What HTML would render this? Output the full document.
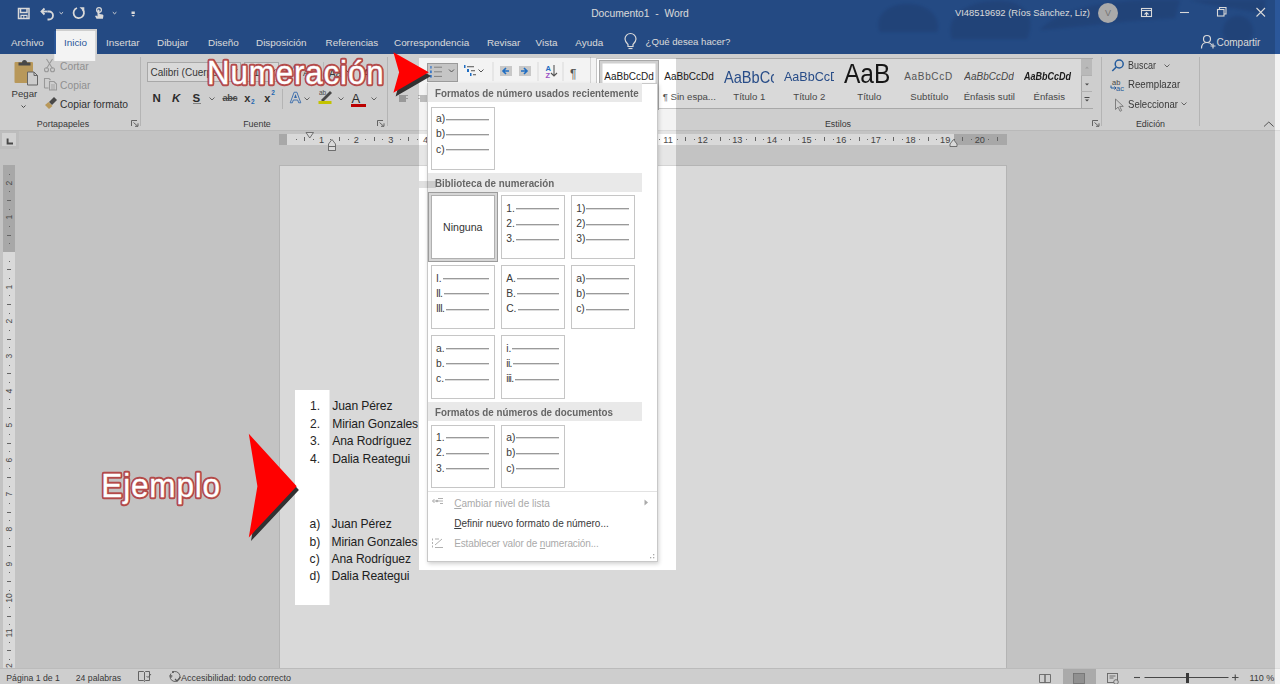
<!DOCTYPE html><html><head><meta charset="utf-8"><title>Documento1 - Word</title><style>
*{box-sizing:border-box}
html,body{margin:0;padding:0}
body{width:1280px;height:684px;overflow:hidden;position:relative;background:#e6e6e6;font-family:"Liberation Sans",sans-serif;color:#444}
.a{position:absolute}
.t{position:absolute;white-space:nowrap;line-height:1}
svg{position:absolute;overflow:visible}
</style></head><body>
<div class="a" style="left:0px;top:0px;width:1280px;height:54px;background:#2b579a"></div>
<svg style="left:0;top:0" width="1280" height="54"><defs><filter id="cb"><feGaussianBlur stdDeviation="1.5"/></filter></defs><g fill="#1d3b6e" opacity="0.26" filter="url(#cb)"><path d="M880 32C874 18 886 4 906 4C926 3 942 16 937 32Z"/><path d="M952 39C944 16 968 0 1000 1C1032 2 1034 24 1027 39Z"/><path d="M1040 30C1060 8 1110 -2 1180 0L1175 18C1130 20 1090 26 1040 30Z"/><circle cx="1238" cy="31" r="15"/><path d="M1190 0H1265V14C1240 8 1210 6 1190 0Z"/></g></svg>
<svg style="left:0;top:0" width="140" height="28" fill="none" stroke="#fff" stroke-width="1.5">
<path d="M18.5 8.5h10.5v10h-10.5z"/><path d="M20.5 8.5v4h6.5v-4" /><path d="M21 18.5v-3.2h6v3.2" stroke-width="1.2"/><rect x="23.3" y="16" width="1" height="2" fill="#fff" stroke="none"/>
<path d="M47.5 11.5h1.5a4 4 0 0 1 0 8h-1.5" stroke-width="1.8"/><path d="M44.5 8.5l-3 3 3 3" stroke-width="1.8"/><path d="M42 11.5h5.5" stroke-width="1.8"/>
<path d="M59.5 12.2l1.8 1.6 1.8-1.6" stroke-width="1"/>
<path d="M82.5 9.3a5.2 5.2 0 1 1 -5.5 -1.3" stroke-width="1.8"/><path d="M79.5 7.2h4.8v4.8z" fill="#fff" stroke="none"/>
<circle cx="99" cy="10" r="2.4" stroke-width="1.2"/><path d="M96.5 18.8l-1.5-2.8 1.3-.6 1.2 1.2V10.5a1 1 0 0 1 2 0v3.5l3 .6c.7.2 1 .8.9 1.5l-.5 2.7z" fill="#fff" stroke="none"/>
<path d="M112.8 12.2l1.8 1.6 1.8-1.6" stroke-width="1"/>
<rect x="131.5" y="11.5" width="3.3" height="2.5" fill="#fff" stroke="none"/><path d="M131.3 15h3.7l-1.85 1.8z" fill="#fff" stroke="none"/>
</svg>
<div class="t" style="left:440px;width:400px;text-align:center;top:8.78px;font-size:10.3px;color:#fff;font-weight:400;">Documento1&nbsp; - &nbsp;Word</div>
<div class="t" style="left:955px;top:8.04px;font-size:9.4px;color:#fff;font-weight:400;">VI48519692 (Ríos Sánchez, Liz)</div>
<div class="a" style="left:1098px;top:3px;width:20px;height:20px;border-radius:50%;background:#c8c8c8"></div>
<div class="t" style="left:908px;width:400px;text-align:center;top:9.38px;font-size:9px;color:#888;font-weight:400;">V</div>
<svg style="left:0;top:0" width="1280" height="28" fill="none" stroke="#fff" stroke-width="1.1">
<rect x="1141.5" y="8.5" width="10" height="8"/><path d="M1141.5 10.5h10"/><path d="M1144.5 14.5l2-2 2 2M1146.5 12.5v4"/>
<path d="M1180 12.5h9"/>
<rect x="1217.5" y="9.5" width="6.5" height="6.5"/><path d="M1219.5 9.5v-2h6.5v6.5h-2"/>
<path d="M1256.5 8l8.5 8.5M1265 8l-8.5 8.5"/>
</svg>
<div class="a" style="left:56px;top:29px;width:41px;height:25px;background:#f3f3f3"></div>
<div class="t" style="left:10.9px;top:37.72px;font-size:9.9px;color:#fff;font-weight:400;">Archivo</div>
<div class="t" style="left:64px;top:37.72px;font-size:9.9px;color:#2b579a;font-weight:400;">Inicio</div>
<div class="t" style="left:106px;top:37.72px;font-size:9.9px;color:#fff;font-weight:400;">Insertar</div>
<div class="t" style="left:157px;top:37.72px;font-size:9.9px;color:#fff;font-weight:400;">Dibujar</div>
<div class="t" style="left:208px;top:37.72px;font-size:9.9px;color:#fff;font-weight:400;">Diseño</div>
<div class="t" style="left:256px;top:37.72px;font-size:9.9px;color:#fff;font-weight:400;">Disposición</div>
<div class="t" style="left:325.6px;top:37.72px;font-size:9.9px;color:#fff;font-weight:400;">Referencias</div>
<div class="t" style="left:394px;top:37.72px;font-size:9.9px;color:#fff;font-weight:400;">Correspondencia</div>
<div class="t" style="left:486.9px;top:37.72px;font-size:9.9px;color:#fff;font-weight:400;">Revisar</div>
<div class="t" style="left:535.6px;top:37.72px;font-size:9.9px;color:#fff;font-weight:400;">Vista</div>
<div class="t" style="left:575.3px;top:37.72px;font-size:9.9px;color:#fff;font-weight:400;">Ayuda</div>
<svg style="left:0;top:0" width="1280" height="54" fill="none" stroke="#fff" stroke-width="1.2">
<path d="M628 44.5c-1.5-1.5-3-3-3-5.5a5.5 5.5 0 0 1 11 0c0 2.5-1.5 4-3 5.5v2h-5z"/><path d="M628.5 48.5h4"/>
</svg>
<div class="t" style="left:645.6px;top:37.37px;font-size:9.6px;color:#fff;font-weight:400;">¿Qué desea hacer?</div>
<svg style="left:0;top:0" width="1280" height="54" fill="none" stroke="#fff" stroke-width="1.2">
<circle cx="1207" cy="39" r="3.5"/><path d="M1201.5 48.5c0-4 2.5-6 5.5-6s4 1 5 2.5"/><path d="M1210.5 46h5M1213 43.5v5"/>
</svg>
<div class="t" style="left:1216.5px;top:37.83px;font-size:10px;color:#fff;font-weight:400;">Compartir</div>
<div class="a" style="left:0px;top:54px;width:1280px;height:76px;background:#f3f3f3"></div>
<div class="a" style="left:0px;top:130px;width:1280px;height:1px;background:#dadada"></div>
<div class="a" style="left:140px;top:57px;width:1px;height:69px;background:#d4d4d4"></div>
<div class="a" style="left:386.5px;top:57px;width:1px;height:69px;background:#d4d4d4"></div>
<div class="a" style="left:590px;top:57px;width:1px;height:69px;background:#d4d4d4"></div>
<div class="a" style="left:1100.5px;top:57px;width:1px;height:69px;background:#d4d4d4"></div>
<div class="a" style="left:1198.5px;top:57px;width:1px;height:69px;background:#d4d4d4"></div>
<div class="t" style="left:-137px;width:400px;text-align:center;top:119.67px;font-size:8.9px;color:#444;font-weight:400;">Portapapeles</div>
<div class="t" style="left:57px;width:400px;text-align:center;top:119.67px;font-size:8.9px;color:#444;font-weight:400;">Fuente</div>
<div class="t" style="left:638px;width:400px;text-align:center;top:119.67px;font-size:8.9px;color:#444;font-weight:400;">Estilos</div>
<div class="t" style="left:950.5px;width:400px;text-align:center;top:119.67px;font-size:8.9px;color:#444;font-weight:400;">Edición</div>
<svg style="left:130.5px;top:120px" width="8" height="7" fill="none" stroke="#666" stroke-width="0.9"><path d="M0.5 6V0.5H6"/><path d="M2.5 2.5l4 3.5M4 6.3h3V3.3"/></svg>
<svg style="left:377.3px;top:120px" width="8" height="7" fill="none" stroke="#666" stroke-width="0.9"><path d="M0.5 6V0.5H6"/><path d="M2.5 2.5l4 3.5M4 6.3h3V3.3"/></svg>
<svg style="left:1092px;top:120px" width="8" height="7" fill="none" stroke="#666" stroke-width="0.9"><path d="M0.5 6V0.5H6"/><path d="M2.5 2.5l4 3.5M4 6.3h3V3.3"/></svg>
<svg style="left:1262.5px;top:121px" width="12" height="8" fill="none" stroke="#555" stroke-width="0.9"><path d="M1 5.5l4.8-4.5 4.8 4.5"/></svg>
<svg style="left:0;top:54px" width="140" height="76">
<rect x="14.5" y="8" width="18.5" height="21" rx="1" fill="#d9b36a"/>
<path d="M18.5 11.5v-3h3.5a2.5 2.5 0 0 1 5 0h3.5v3z" fill="#555"/>
<path d="M27.5 18h6.5l3.5 3.5v9.5h-10z" fill="#f0f0f0" stroke="#777" stroke-width="1"/>
<path d="M34 18v3.5h3.5" fill="none" stroke="#777" stroke-width="1"/>
<path d="M21.5 51.5l2 2 2-2" fill="none" stroke="#555" stroke-width="1"/>
<g fill="none" stroke="#b4b4b4" stroke-width="1.1"><path d="M46.5 5l6 9.5M52.5 5l-6 9.5"/><circle cx="46.5" cy="15.8" r="2"/><circle cx="52.5" cy="15.8" r="2"/>
<path d="M44.5 34V24.5h4.5l1.5 1.5"/><path d="M44.5 34h4"/><path d="M49.5 27.5h4.5l2.5 2.5v6h-7z"/><path d="M51 31h4M51 33h4M51 35h4" stroke-width="0.8"/></g>
<path d="M45 51l4 4 3.5-3-4-4z" fill="#d9b36a"/><path d="M49 48l5-5 3 3-5 5z" fill="#555"/>
</svg>
<div class="t" style="left:11.6px;top:89.07px;font-size:9.6px;color:#444;font-weight:400;">Pegar</div>
<div class="t" style="left:60px;top:61.58px;font-size:10.3px;color:#aaa;font-weight:400;">Cortar</div>
<div class="t" style="left:60px;top:80.58px;font-size:10.3px;color:#aaa;font-weight:400;">Copiar</div>
<div class="t" style="left:60px;top:99.58px;font-size:10.3px;color:#3a3a3a;font-weight:400;">Copiar formato</div>
<div class="a" style="left:147px;top:62px;width:94px;height:19.5px;background:#fff;border:1px solid #c6c6c6"></div>
<div class="t" style="left:150.5px;top:68.03px;font-size:10px;color:#444;font-weight:400;">Calibri (Cuerpo)</div>
<svg style="left:231px;top:69px" width="8" height="5" fill="none" stroke="#555" stroke-width="1"><path d="M0.5 0.5l3 3 3-3"/></svg>
<div class="a" style="left:243.5px;top:62px;width:35.5px;height:19.5px;background:#fff;border:1px solid #c6c6c6"></div>
<div class="t" style="left:249px;top:68.03px;font-size:10px;color:#444;font-weight:400;">11</div>
<svg style="left:269px;top:69px" width="8" height="5" fill="none" stroke="#555" stroke-width="1"><path d="M0.5 0.5l3 3 3-3"/></svg>
<div class="t" style="left:284px;top:67.69px;font-size:11px;color:#444;font-weight:400;">A</div>
<div class="t" style="left:292px;top:64.07px;font-size:7px;color:#2b579a;font-weight:400;">˄</div>
<div class="t" style="left:303px;top:69.38px;font-size:9px;color:#444;font-weight:400;">A</div>
<div class="t" style="left:310px;top:64.07px;font-size:7px;color:#2b579a;font-weight:400;">˅</div>
<div class="a" style="left:322.5px;top:62px;width:1px;height:19px;background:#dadada"></div>
<div class="t" style="left:329px;top:68.53px;font-size:10px;color:#444;font-weight:400;">Aa</div>
<svg style="left:345px;top:69px" width="8" height="5" fill="none" stroke="#555" stroke-width="1"><path d="M0.5 0.5l3 3 3-3"/></svg>
<div class="t" style="left:362px;top:67.69px;font-size:11px;color:#444;font-weight:400;font-style:italic">A</div>
<div class="t" style="left:152.5px;top:92.87px;font-size:11.5px;color:#333;font-weight:700;">N</div>
<div class="t" style="left:172px;top:92.87px;font-size:11.5px;color:#333;font-weight:700;font-style:italic">K</div>
<div class="t" style="left:192.5px;top:92.87px;font-size:11.5px;color:#333;font-weight:700;">S</div>
<div class="a" style="left:193px;top:103.3px;width:8px;height:1px;background:#999"></div>
<svg style="left:208.5px;top:96.5px" width="7" height="5" fill="none" stroke="#666" stroke-width="0.9"><path d="M0.5 0.5l2.5 2.5 2.5-2.5"/></svg>
<svg style="left:304px;top:96.5px" width="7" height="5" fill="none" stroke="#666" stroke-width="0.9"><path d="M0.5 0.5l2.5 2.5 2.5-2.5"/></svg>
<svg style="left:338px;top:96.5px" width="7" height="5" fill="none" stroke="#666" stroke-width="0.9"><path d="M0.5 0.5l2.5 2.5 2.5-2.5"/></svg>
<svg style="left:371px;top:96.5px" width="7" height="5" fill="none" stroke="#666" stroke-width="0.9"><path d="M0.5 0.5l2.5 2.5 2.5-2.5"/></svg>
<div class="t" style="left:222.5px;top:94.41px;font-size:9.2px;color:#555;font-weight:700;text-decoration:line-through;letter-spacing:-0.3px">abc</div>
<div class="t" style="left:244.2px;top:93.09px;font-size:11px;color:#3a3a3a;font-weight:700;">x</div>
<div class="t" style="left:251px;top:99.30px;font-size:6.5px;color:#2b79d0;font-weight:700;">2</div>
<div class="t" style="left:264.2px;top:93.09px;font-size:11px;color:#3a3a3a;font-weight:700;">x</div>
<div class="t" style="left:271.3px;top:89.80px;font-size:6.5px;color:#2b79d0;font-weight:700;">2</div>
<div class="a" style="left:281.5px;top:89px;width:1px;height:20px;background:#d4d4d4"></div>
<svg style="left:288.5px;top:91px" width="13" height="13" viewBox="0 0 16 16" fill="#f3f3f3" stroke="#3d7bc8" stroke-width="1.1"><path d="M1.5 14.5L6.3 1.5h3.4l4.8 13h-2.6l-1.2-3.4H5.3l-1.2 3.4z"/><path d="M6.2 8.6L8 3.8l1.8 4.8z" fill="#3d7bc8" stroke="none"/></svg>
<svg style="left:318px;top:88px" width="20" height="20">
<path d="M3 12l9-9 2 2-9 9z" fill="#555"/><rect x="0.5" y="13" width="13" height="3" fill="#e6e600"/>
</svg>
<div class="t" style="left:319px;top:89.50px;font-size:6.5px;color:#555;font-weight:400;">ab</div>
<div class="t" style="left:351.5px;top:92.00px;font-size:13px;color:#333;font-weight:400;">A</div>
<div class="a" style="left:351px;top:104px;width:15px;height:3px;background:#d00"></div>
<svg style="left:0;top:54px" width="600" height="76">
<g fill="#1f6dc2"><rect x="433" y="11" width="2" height="3"/><rect x="433" y="15.5" width="2" height="3"/><rect x="433" y="20" width="2" height="3"/></g>
<g fill="#777"><rect x="438" y="12" width="9" height="1.3"/><rect x="438" y="16.5" width="9" height="1.3"/><rect x="438" y="21" width="9" height="1.3"/></g>
<path d="M450.5 15.5l2.5 2.5 2.5-2.5" fill="none" stroke="#555" stroke-width="1"/>
<g fill="#1f6dc2"><rect x="464" y="11" width="1.5" height="3"/><rect x="467" y="15" width="2" height="3"/><rect x="470" y="19" width="1.5" height="3"/></g>
<g fill="#777"><rect x="467" y="12" width="7" height="1.3"/><rect x="471" y="16" width="4" height="1.3"/><rect x="473" y="20" width="3" height="1.3"/></g>
<path d="M478.5 15.5l2.5 2.5 2.5-2.5" fill="none" stroke="#555" stroke-width="1"/>
<rect x="492.5" y="8" width="1" height="19" fill="#dadada"/>
<rect x="500" y="12" width="12" height="10" fill="#c8c8c8"/><path d="M506 14l-3 3 3 3M503 17h6" fill="none" stroke="#1f6dc2" stroke-width="1.6"/>
<rect x="519" y="12" width="12" height="10" fill="#c8c8c8"/><path d="M524 14l3 3-3 3M521 17h6" fill="none" stroke="#1f6dc2" stroke-width="1.6"/>
<rect x="537.5" y="8" width="1" height="19" fill="#dadada"/>
<rect x="562.5" y="8" width="1" height="19" fill="#dadada"/>
<path d="M554 11v11M551 19l3 3 3-3" fill="none" stroke="#555" stroke-width="1.1"/>
</svg>
<div class="t" style="left:545px;top:61.15px;font-size:1px;color:#444;font-weight:400;"></div>
<div class="t" style="left:545.5px;top:64.65px;font-size:7.5px;color:#1f6dc2;font-weight:700;">A</div>
<div class="t" style="left:545.5px;top:72.15px;font-size:7.5px;color:#9b4fc4;font-weight:700;">Z</div>
<div class="t" style="left:570px;top:67.84px;font-size:12px;color:#555;font-weight:400;">¶</div>
<div class="a" style="left:399px;top:94.5px;width:7px;height:7px;background:#b4b4b4"></div>
<div class="a" style="left:406px;top:94.5px;width:2px;height:1px;background:#b4b4b4"></div>
<div class="a" style="left:406px;top:97.5px;width:2px;height:1px;background:#b4b4b4"></div>
<div class="a" style="left:420px;top:94.5px;width:6.5px;height:7px;background:#bcbcbc"></div>
<div class="a" style="left:418px;top:94.5px;width:2px;height:1px;background:#bcbcbc"></div>
<div class="a" style="left:418px;top:97.5px;width:2px;height:1px;background:#bcbcbc"></div>
<div class="a" style="left:596px;top:58px;width:497px;height:51px;background:#fff;border:1px solid #c6c6c6"></div>
<div class="a" style="left:599px;top:60px;width:60px;height:50px;border:1px solid #a8a8a8;box-shadow:inset 0 0 0 2.5px #d0d0d0;background:#fff"></div>
<div class="a" style="left:604.3px;top:60px;width:49.7px;height:32px;overflow:hidden"><div class="t" style="left:0;top:11.73px;font-size:10px;color:#222;font-weight:400"><span style="">AaBbCcDd</span></div></div>
<div class="a" style="left:664.3px;top:60px;width:49.7px;height:32px;overflow:hidden"><div class="t" style="left:0;top:11.73px;font-size:10px;color:#222;font-weight:400"><span style="">AaBbCcDd</span></div></div>
<div class="t" style="left:489.29999999999995px;width:400px;text-align:center;top:92.07px;font-size:9.6px;color:#555;font-weight:400;">¶ Sin espa...</div>
<div class="a" style="left:724.3px;top:60px;width:49.7px;height:32px;overflow:hidden"><div class="t" style="left:0;top:8.69px;font-size:16.2px;color:#2f5aa0;font-weight:400"><span style="display:inline-block;transform:scaleX(0.9);transform-origin:0 0">AaBbCcDd</span></div></div>
<div class="t" style="left:549.3px;width:400px;text-align:center;top:92.07px;font-size:9.6px;color:#555;font-weight:400;">Título 1</div>
<div class="a" style="left:784.3px;top:60px;width:49.7px;height:32px;overflow:hidden"><div class="t" style="left:0;top:9.97px;font-size:13.5px;color:#2f5aa0;font-weight:400"><span style="display:inline-block;transform:scaleX(0.93);transform-origin:0 0">AaBbCcDd</span></div></div>
<div class="t" style="left:609.3px;width:400px;text-align:center;top:92.07px;font-size:9.6px;color:#555;font-weight:400;">Título 2</div>
<div class="a" style="left:844.3px;top:60px;width:49.7px;height:32px;overflow:hidden"><div class="t" style="left:0;top:2.34px;font-size:25px;color:#1a1a1a;font-weight:400"><span style="display:inline-block;transform:scale(0.98,1.1);transform-origin:0 100%">AaB</span></div></div>
<div class="t" style="left:669.3px;width:400px;text-align:center;top:92.07px;font-size:9.6px;color:#555;font-weight:400;">Título</div>
<div class="a" style="left:904.3px;top:60px;width:49.7px;height:32px;overflow:hidden"><div class="t" style="left:0;top:12.03px;font-size:10px;color:#666;font-weight:400"><span style="letter-spacing:0.65px">AaBbCcD</span></div></div>
<div class="t" style="left:729.3px;width:400px;text-align:center;top:92.07px;font-size:9.6px;color:#555;font-weight:400;">Subtítulo</div>
<div class="a" style="left:964.3px;top:60px;width:49.7px;height:32px;overflow:hidden"><div class="t" style="left:0;top:12.03px;font-size:10px;color:#555;font-weight:400"><span style="font-style:italic">AaBbCcDd</span></div></div>
<div class="t" style="left:789.3px;width:400px;text-align:center;top:92.07px;font-size:9.6px;color:#555;font-weight:400;">Énfasis sutil</div>
<div class="a" style="left:1024.3px;top:60px;width:49.7px;height:32px;overflow:hidden"><div class="t" style="left:0;top:12.03px;font-size:10px;color:#222;font-weight:700"><span style="font-style:italic;display:inline-block;transform:scaleX(0.9);transform-origin:0 0">AaBbCcDd</span></div></div>
<div class="t" style="left:849.3px;width:400px;text-align:center;top:92.07px;font-size:9.6px;color:#555;font-weight:400;">Énfasis</div>
<div class="a" style="left:1080.5px;top:59px;width:12px;height:49px;border-left:1px solid #c6c6c6;background:#f3f3f3"></div>
<div class="a" style="left:1081px;top:75px;width:11px;height:1px;background:#d0d0d0"></div>
<div class="a" style="left:1081px;top:91px;width:11px;height:1px;background:#d0d0d0"></div>
<div class="a" style="left:1081px;top:59px;width:11px;height:16px;background:#dadada"></div>
<svg style="left:1081px;top:59px" width="12" height="49" stroke="none"><path d="M4 9.5l2-2 2 2z" fill="#bbb"/><path d="M4 24.5h4l-2 2z" fill="#555"/><rect x="3.5" y="38" width="5" height="1" fill="#555"/><path d="M4 40.5h4l-2 2z" fill="#555"/></svg>
<svg style="left:1100px;top:54px" width="100" height="76" fill="none" stroke="#2b6cb8" stroke-width="1.5">
<circle cx="19.2" cy="10" r="4"/><path d="M16.3 13l-4 4"/>
<path d="M11 90" />
</svg>
<div class="t" style="left:1127.8px;top:61.37px;font-size:10.2px;color:#444;font-weight:400;transform:scaleX(0.88);transform-origin:0 0">Buscar</div>
<svg style="left:1164px;top:64px" width="7" height="5" fill="none" stroke="#666" stroke-width="0.9"><path d="M0.5 0.5l2.5 2.5 2.5-2.5"/></svg>
<div class="t" style="left:1112px;top:79.15px;font-size:7.5px;color:#555;font-weight:400;">ab</div>
<div class="t" style="left:1116px;top:84.65px;font-size:7.5px;color:#2b6cb8;font-weight:400;">ac</div>
<svg style="left:1110px;top:85px" width="8" height="6" fill="none" stroke="#2b6cb8" stroke-width="1"><path d="M1 0.5v2.5h5M4.5 1.5l1.5 1.5-1.5 1.5"/></svg>
<div class="t" style="left:1127.8px;top:80.37px;font-size:10.2px;color:#444;font-weight:400;transform:scaleX(0.95);transform-origin:0 0">Reemplazar</div>
<svg style="left:1114px;top:98px" width="12" height="15" fill="#f4f4f4" stroke="#8a8a8a" stroke-width="0.9"><path d="M1.5 1v10.5l2.6-2.4 2 4.2 1.6-.8-2-4.1h3.6z"/></svg>
<div class="t" style="left:1127.8px;top:99.57px;font-size:10.2px;color:#444;font-weight:400;transform:scaleX(0.94);transform-origin:0 0">Seleccionar</div>
<svg style="left:1181px;top:102px" width="7" height="5" fill="none" stroke="#666" stroke-width="0.9"><path d="M0.5 0.5l2.5 2.5 2.5-2.5"/></svg>
<div class="a" style="left:0px;top:130.5px;width:18.5px;height:18px;background:#dedede"></div>
<div class="a" style="left:2.2px;top:132.7px;width:14.3px;height:13.5px;background:#f6f6f6"></div>
<svg style="left:5px;top:137px" width="9" height="9" fill="none" stroke="#555" stroke-width="1.9"><path d="M2.6 1.5v5h5.4"/></svg>
<div class="a" style="left:278.5px;top:134px;width:728px;height:11px;background:#c6c6c6"></div>
<div class="a" style="left:287px;top:134px;width:667px;height:11px;background:#fff"></div>
<div class="a" style="left:296px;top:139px;width:1px;height:1.2px;background:#777"></div>
<div class="a" style="left:304px;top:137px;width:1px;height:4px;background:#777"></div>
<div class="a" style="left:313px;top:139px;width:1px;height:1.2px;background:#777"></div>
<div class="t" style="left:121.63999999999999px;width:400px;text-align:center;top:135.81px;font-size:9.2px;color:#505050;font-weight:400;">1</div>
<div class="a" style="left:330px;top:139px;width:1px;height:1.2px;background:#777"></div>
<div class="a" style="left:339px;top:137px;width:1px;height:4px;background:#777"></div>
<div class="a" style="left:348px;top:139px;width:1px;height:1.2px;background:#777"></div>
<div class="t" style="left:156.27999999999997px;width:400px;text-align:center;top:135.81px;font-size:9.2px;color:#505050;font-weight:400;">2</div>
<div class="a" style="left:365px;top:139px;width:1px;height:1.2px;background:#777"></div>
<div class="a" style="left:374px;top:137px;width:1px;height:4px;background:#777"></div>
<div class="a" style="left:382px;top:139px;width:1px;height:1.2px;background:#777"></div>
<div class="t" style="left:190.92000000000002px;width:400px;text-align:center;top:135.81px;font-size:9.2px;color:#505050;font-weight:400;">3</div>
<div class="a" style="left:400px;top:139px;width:1px;height:1.2px;background:#777"></div>
<div class="a" style="left:408px;top:137px;width:1px;height:4px;background:#777"></div>
<div class="a" style="left:417px;top:139px;width:1px;height:1.2px;background:#777"></div>
<div class="t" style="left:225.56px;width:400px;text-align:center;top:135.81px;font-size:9.2px;color:#505050;font-weight:400;">4</div>
<div class="a" style="left:434px;top:139px;width:1px;height:1.2px;background:#777"></div>
<div class="a" style="left:443px;top:137px;width:1px;height:4px;background:#777"></div>
<div class="a" style="left:452px;top:139px;width:1px;height:1.2px;background:#777"></div>
<div class="t" style="left:260.2px;width:400px;text-align:center;top:135.81px;font-size:9.2px;color:#505050;font-weight:400;">5</div>
<div class="a" style="left:469px;top:139px;width:1px;height:1.2px;background:#777"></div>
<div class="a" style="left:478px;top:137px;width:1px;height:4px;background:#777"></div>
<div class="a" style="left:486px;top:139px;width:1px;height:1.2px;background:#777"></div>
<div class="t" style="left:294.84000000000003px;width:400px;text-align:center;top:135.81px;font-size:9.2px;color:#505050;font-weight:400;">6</div>
<div class="a" style="left:504px;top:139px;width:1px;height:1.2px;background:#777"></div>
<div class="a" style="left:512px;top:137px;width:1px;height:4px;background:#777"></div>
<div class="a" style="left:521px;top:139px;width:1px;height:1.2px;background:#777"></div>
<div class="t" style="left:329.48px;width:400px;text-align:center;top:135.81px;font-size:9.2px;color:#505050;font-weight:400;">7</div>
<div class="a" style="left:538px;top:139px;width:1px;height:1.2px;background:#777"></div>
<div class="a" style="left:547px;top:137px;width:1px;height:4px;background:#777"></div>
<div class="a" style="left:555px;top:139px;width:1px;height:1.2px;background:#777"></div>
<div class="t" style="left:364.12px;width:400px;text-align:center;top:135.81px;font-size:9.2px;color:#505050;font-weight:400;">8</div>
<div class="a" style="left:573px;top:139px;width:1px;height:1.2px;background:#777"></div>
<div class="a" style="left:581px;top:137px;width:1px;height:4px;background:#777"></div>
<div class="a" style="left:590px;top:139px;width:1px;height:1.2px;background:#777"></div>
<div class="t" style="left:398.76px;width:400px;text-align:center;top:135.81px;font-size:9.2px;color:#505050;font-weight:400;">9</div>
<div class="a" style="left:607px;top:139px;width:1px;height:1.2px;background:#777"></div>
<div class="a" style="left:616px;top:137px;width:1px;height:4px;background:#777"></div>
<div class="a" style="left:625px;top:139px;width:1px;height:1.2px;background:#777"></div>
<div class="t" style="left:433.4px;width:400px;text-align:center;top:135.81px;font-size:9.2px;color:#505050;font-weight:400;">10</div>
<div class="a" style="left:642px;top:139px;width:1px;height:1.2px;background:#777"></div>
<div class="a" style="left:651px;top:137px;width:1px;height:4px;background:#777"></div>
<div class="a" style="left:659px;top:139px;width:1px;height:1.2px;background:#777"></div>
<div class="t" style="left:468.03999999999996px;width:400px;text-align:center;top:135.81px;font-size:9.2px;color:#505050;font-weight:400;">11</div>
<div class="a" style="left:677px;top:139px;width:1px;height:1.2px;background:#777"></div>
<div class="a" style="left:685px;top:137px;width:1px;height:4px;background:#777"></div>
<div class="a" style="left:694px;top:139px;width:1px;height:1.2px;background:#777"></div>
<div class="t" style="left:502.68000000000006px;width:400px;text-align:center;top:135.81px;font-size:9.2px;color:#505050;font-weight:400;">12</div>
<div class="a" style="left:711px;top:139px;width:1px;height:1.2px;background:#777"></div>
<div class="a" style="left:720px;top:137px;width:1px;height:4px;background:#777"></div>
<div class="a" style="left:729px;top:139px;width:1px;height:1.2px;background:#777"></div>
<div class="t" style="left:537.3199999999999px;width:400px;text-align:center;top:135.81px;font-size:9.2px;color:#505050;font-weight:400;">13</div>
<div class="a" style="left:746px;top:139px;width:1px;height:1.2px;background:#777"></div>
<div class="a" style="left:755px;top:137px;width:1px;height:4px;background:#777"></div>
<div class="a" style="left:763px;top:139px;width:1px;height:1.2px;background:#777"></div>
<div class="t" style="left:571.96px;width:400px;text-align:center;top:135.81px;font-size:9.2px;color:#505050;font-weight:400;">14</div>
<div class="a" style="left:781px;top:139px;width:1px;height:1.2px;background:#777"></div>
<div class="a" style="left:789px;top:137px;width:1px;height:4px;background:#777"></div>
<div class="a" style="left:798px;top:139px;width:1px;height:1.2px;background:#777"></div>
<div class="t" style="left:606.6px;width:400px;text-align:center;top:135.81px;font-size:9.2px;color:#505050;font-weight:400;">15</div>
<div class="a" style="left:815px;top:139px;width:1px;height:1.2px;background:#777"></div>
<div class="a" style="left:824px;top:137px;width:1px;height:4px;background:#777"></div>
<div class="a" style="left:833px;top:139px;width:1px;height:1.2px;background:#777"></div>
<div class="t" style="left:641.24px;width:400px;text-align:center;top:135.81px;font-size:9.2px;color:#505050;font-weight:400;">16</div>
<div class="a" style="left:850px;top:139px;width:1px;height:1.2px;background:#777"></div>
<div class="a" style="left:859px;top:137px;width:1px;height:4px;background:#777"></div>
<div class="a" style="left:867px;top:139px;width:1px;height:1.2px;background:#777"></div>
<div class="t" style="left:675.88px;width:400px;text-align:center;top:135.81px;font-size:9.2px;color:#505050;font-weight:400;">17</div>
<div class="a" style="left:885px;top:139px;width:1px;height:1.2px;background:#777"></div>
<div class="a" style="left:893px;top:137px;width:1px;height:4px;background:#777"></div>
<div class="a" style="left:902px;top:139px;width:1px;height:1.2px;background:#777"></div>
<div class="t" style="left:710.52px;width:400px;text-align:center;top:135.81px;font-size:9.2px;color:#505050;font-weight:400;">18</div>
<div class="a" style="left:919px;top:139px;width:1px;height:1.2px;background:#777"></div>
<div class="a" style="left:928px;top:137px;width:1px;height:4px;background:#777"></div>
<div class="a" style="left:936px;top:139px;width:1px;height:1.2px;background:#777"></div>
<div class="t" style="left:745.16px;width:400px;text-align:center;top:135.81px;font-size:9.2px;color:#505050;font-weight:400;">19</div>
<div class="a" style="left:954px;top:139px;width:1px;height:1.2px;background:#777"></div>
<div class="a" style="left:962px;top:137px;width:1px;height:4px;background:#777"></div>
<div class="a" style="left:971px;top:139px;width:1px;height:1.2px;background:#777"></div>
<div class="t" style="left:779.8px;width:400px;text-align:center;top:135.81px;font-size:9.2px;color:#505050;font-weight:400;">20</div>
<div class="a" style="left:988px;top:139px;width:1px;height:1.2px;background:#777"></div>
<div class="a" style="left:997px;top:137px;width:1px;height:4px;background:#777"></div>
<svg style="left:0;top:0" width="1280" height="160" fill="#fff" stroke="#777" stroke-width="0.9">
<path d="M306 132.5h7.5l-3.75 5.5z"/>
<path d="M328.5 144l3.5-4.5 3.5 4.5v2.5h-7z"/><rect x="328.5" y="146.5" width="7" height="4"/>
<path d="M950 144l3.5-4.5 3.5 4.5v2.5h-7z"/>
</svg>
<div class="a" style="left:3px;top:165px;width:12px;height:503px;background:#fff"></div>
<div class="a" style="left:3px;top:165px;width:12px;height:87px;background:#c6c6c6"></div>
<div class="a" style="left:8.5px;top:174px;width:1.2px;height:1px;background:#777"></div>
<div class="t" style="left:3px;width:12px;text-align:center;top:177.72px;height:10px;font-size:8.5px;line-height:10px;color:#555;transform:rotate(-90deg)">2</div>
<div class="a" style="left:8.5px;top:191px;width:1.2px;height:1px;background:#777"></div>
<div class="a" style="left:7px;top:200px;width:4px;height:1px;background:#777"></div>
<div class="a" style="left:8.5px;top:209px;width:1.2px;height:1px;background:#777"></div>
<div class="t" style="left:3px;width:12px;text-align:center;top:212.36px;height:10px;font-size:8.5px;line-height:10px;color:#555;transform:rotate(-90deg)">1</div>
<div class="a" style="left:8.5px;top:226px;width:1.2px;height:1px;background:#777"></div>
<div class="a" style="left:7px;top:235px;width:4px;height:1px;background:#777"></div>
<div class="a" style="left:8.5px;top:243px;width:1.2px;height:1px;background:#777"></div>
<div class="a" style="left:8.5px;top:261px;width:1.2px;height:1px;background:#777"></div>
<div class="a" style="left:7px;top:269px;width:4px;height:1px;background:#777"></div>
<div class="a" style="left:8.5px;top:278px;width:1.2px;height:1px;background:#777"></div>
<div class="t" style="left:3px;width:12px;text-align:center;top:281.64px;height:10px;font-size:8.5px;line-height:10px;color:#555;transform:rotate(-90deg)">1</div>
<div class="a" style="left:8.5px;top:295px;width:1.2px;height:1px;background:#777"></div>
<div class="a" style="left:7px;top:304px;width:4px;height:1px;background:#777"></div>
<div class="a" style="left:8.5px;top:313px;width:1.2px;height:1px;background:#777"></div>
<div class="t" style="left:3px;width:12px;text-align:center;top:316.28px;height:10px;font-size:8.5px;line-height:10px;color:#555;transform:rotate(-90deg)">2</div>
<div class="a" style="left:8.5px;top:330px;width:1.2px;height:1px;background:#777"></div>
<div class="a" style="left:7px;top:339px;width:4px;height:1px;background:#777"></div>
<div class="a" style="left:8.5px;top:347px;width:1.2px;height:1px;background:#777"></div>
<div class="t" style="left:3px;width:12px;text-align:center;top:350.92px;height:10px;font-size:8.5px;line-height:10px;color:#555;transform:rotate(-90deg)">3</div>
<div class="a" style="left:8.5px;top:365px;width:1.2px;height:1px;background:#777"></div>
<div class="a" style="left:7px;top:373px;width:4px;height:1px;background:#777"></div>
<div class="a" style="left:8.5px;top:382px;width:1.2px;height:1px;background:#777"></div>
<div class="t" style="left:3px;width:12px;text-align:center;top:385.56px;height:10px;font-size:8.5px;line-height:10px;color:#555;transform:rotate(-90deg)">4</div>
<div class="a" style="left:8.5px;top:399px;width:1.2px;height:1px;background:#777"></div>
<div class="a" style="left:7px;top:408px;width:4px;height:1px;background:#777"></div>
<div class="a" style="left:8.5px;top:417px;width:1.2px;height:1px;background:#777"></div>
<div class="t" style="left:3px;width:12px;text-align:center;top:420.2px;height:10px;font-size:8.5px;line-height:10px;color:#555;transform:rotate(-90deg)">5</div>
<div class="a" style="left:8.5px;top:434px;width:1.2px;height:1px;background:#777"></div>
<div class="a" style="left:7px;top:443px;width:4px;height:1px;background:#777"></div>
<div class="a" style="left:8.5px;top:451px;width:1.2px;height:1px;background:#777"></div>
<div class="t" style="left:3px;width:12px;text-align:center;top:454.84000000000003px;height:10px;font-size:8.5px;line-height:10px;color:#555;transform:rotate(-90deg)">6</div>
<div class="a" style="left:8.5px;top:468px;width:1.2px;height:1px;background:#777"></div>
<div class="a" style="left:7px;top:477px;width:4px;height:1px;background:#777"></div>
<div class="a" style="left:8.5px;top:486px;width:1.2px;height:1px;background:#777"></div>
<div class="t" style="left:3px;width:12px;text-align:center;top:489.48px;height:10px;font-size:8.5px;line-height:10px;color:#555;transform:rotate(-90deg)">7</div>
<div class="a" style="left:8.5px;top:503px;width:1.2px;height:1px;background:#777"></div>
<div class="a" style="left:7px;top:512px;width:4px;height:1px;background:#777"></div>
<div class="a" style="left:8.5px;top:520px;width:1.2px;height:1px;background:#777"></div>
<div class="t" style="left:3px;width:12px;text-align:center;top:524.12px;height:10px;font-size:8.5px;line-height:10px;color:#555;transform:rotate(-90deg)">8</div>
<div class="a" style="left:8.5px;top:538px;width:1.2px;height:1px;background:#777"></div>
<div class="a" style="left:7px;top:546px;width:4px;height:1px;background:#777"></div>
<div class="a" style="left:8.5px;top:555px;width:1.2px;height:1px;background:#777"></div>
<div class="t" style="left:3px;width:12px;text-align:center;top:558.76px;height:10px;font-size:8.5px;line-height:10px;color:#555;transform:rotate(-90deg)">9</div>
<div class="a" style="left:8.5px;top:572px;width:1.2px;height:1px;background:#777"></div>
<div class="a" style="left:7px;top:581px;width:4px;height:1px;background:#777"></div>
<div class="a" style="left:8.5px;top:590px;width:1.2px;height:1px;background:#777"></div>
<div class="t" style="left:3px;width:12px;text-align:center;top:593.4px;height:10px;font-size:8.5px;line-height:10px;color:#555;transform:rotate(-90deg)">10</div>
<div class="a" style="left:8.5px;top:607px;width:1.2px;height:1px;background:#777"></div>
<div class="a" style="left:7px;top:616px;width:4px;height:1px;background:#777"></div>
<div class="a" style="left:8.5px;top:624px;width:1.2px;height:1px;background:#777"></div>
<div class="t" style="left:3px;width:12px;text-align:center;top:628.04px;height:10px;font-size:8.5px;line-height:10px;color:#555;transform:rotate(-90deg)">11</div>
<div class="a" style="left:8.5px;top:642px;width:1.2px;height:1px;background:#777"></div>
<div class="a" style="left:7px;top:650px;width:4px;height:1px;background:#777"></div>
<div class="a" style="left:8.5px;top:659px;width:1.2px;height:1px;background:#777"></div>
<div class="t" style="left:3px;width:12px;text-align:center;top:662.6800000000001px;height:10px;font-size:8.5px;line-height:10px;color:#555;transform:rotate(-90deg)">12</div>
<div class="a" style="left:280px;top:166px;width:726px;height:502px;background:#fff;box-shadow:0 0 0 1px #d4d4d4"></div>
<div class="t" style="left:310px;top:400.06px;font-size:12.1px;color:#262626;font-weight:400;">1.</div>
<div class="t" style="left:332.2px;top:400.06px;font-size:12.1px;color:#262626;font-weight:400;letter-spacing:-0.1px">Juan Pérez</div>
<div class="t" style="left:310px;top:417.56px;font-size:12.1px;color:#262626;font-weight:400;">2.</div>
<div class="t" style="left:332.2px;top:417.56px;font-size:12.1px;color:#262626;font-weight:400;letter-spacing:-0.1px">Mirian Gonzales</div>
<div class="t" style="left:310px;top:435.06px;font-size:12.1px;color:#262626;font-weight:400;">3.</div>
<div class="t" style="left:332.2px;top:435.06px;font-size:12.1px;color:#262626;font-weight:400;letter-spacing:-0.1px">Ana Rodríguez</div>
<div class="t" style="left:310px;top:452.56px;font-size:12.1px;color:#262626;font-weight:400;">4.</div>
<div class="t" style="left:332.2px;top:452.56px;font-size:12.1px;color:#262626;font-weight:400;letter-spacing:-0.1px">Dalia Reategui</div>
<div class="t" style="left:309.6px;top:518.26px;font-size:12.1px;color:#262626;font-weight:400;">a)</div>
<div class="t" style="left:331.5px;top:518.26px;font-size:12.1px;color:#262626;font-weight:400;letter-spacing:-0.1px">Juan Pérez</div>
<div class="t" style="left:309.6px;top:535.61px;font-size:12.1px;color:#262626;font-weight:400;">b)</div>
<div class="t" style="left:331.5px;top:535.61px;font-size:12.1px;color:#262626;font-weight:400;letter-spacing:-0.1px">Mirian Gonzales</div>
<div class="t" style="left:309.6px;top:552.96px;font-size:12.1px;color:#262626;font-weight:400;">c)</div>
<div class="t" style="left:331.5px;top:552.96px;font-size:12.1px;color:#262626;font-weight:400;letter-spacing:-0.1px">Ana Rodríguez</div>
<div class="t" style="left:309.6px;top:570.31px;font-size:12.1px;color:#262626;font-weight:400;">d)</div>
<div class="t" style="left:331.5px;top:570.31px;font-size:12.1px;color:#262626;font-weight:400;letter-spacing:-0.1px">Dalia Reategui</div>
<div class="a" style="left:0px;top:668px;width:1280px;height:16px;background:#f3f3f3"></div>
<div class="a" style="left:0px;top:668px;width:1280px;height:1px;background:#dcdcdc"></div>
<div class="t" style="left:6.25px;top:674.14px;font-size:8.7px;color:#444;font-weight:400;">Página 1 de 1</div>
<div class="t" style="left:75.75px;top:674.14px;font-size:8.7px;color:#444;font-weight:400;">24 palabras</div>
<svg style="left:0;top:668px" width="300" height="16" fill="none" stroke="#666" stroke-width="0.9">
<path d="M138.5 3.5h5l1 1 1-1h4v9h-4l-1 1-1-1h-5z"/><path d="M144.5 4.5v8"/><path d="M146.5 8l1.5 1.5 3-3.5" />
<path d="M171 5.5a5 5 0 1 0 1 -1" /><circle cx="173" cy="4" r="1" fill="#666" stroke="none"/><path d="M175 11l2 2 3.5-4" stroke-width="1.2"/><path d="M171 7v3M169.5 8h3"/>
</svg>
<div class="t" style="left:181px;top:673.88px;font-size:9px;color:#444;font-weight:400;">Accesibilidad: todo correcto</div>
<div class="a" style="left:1063px;top:668.5px;width:33px;height:15.5px;background:#c8c8c8"></div>
<svg style="left:0;top:669.5px" width="1280" height="16" fill="none" stroke="#777" stroke-width="0.9">
<path d="M1039.5 4.5h5.5v8h-5.5zM1045 4.5h5.5v8H1045z"/>
<rect x="1073.5" y="3.5" width="11" height="10" fill="#aaa" stroke="#888"/>
<rect x="1107.5" y="3.5" width="10" height="9"/><path d="M1109.5 6h6M1109.5 8h4"/><circle cx="1116" cy="12" r="2.3" fill="#f3f3f3"/>
<path d="M1134 7.5h6" stroke="#555" stroke-width="1.1"/>
<path d="M1144.5 7.5h84" stroke="#555" stroke-width="1"/>
<path d="M1232 7.5h6.5M1235.25 4.5v6" stroke="#555" stroke-width="1.1"/>
</svg>
<div class="a" style="left:1185.5px;top:673px;width:3.5px;height:9.5px;background:#444"></div>
<div class="t" style="left:1249.4px;top:673.88px;font-size:9px;color:#444;font-weight:400;">110 %</div>
<div class="a" style="left:426.5px;top:82.5px;width:231px;height:479px;background:#fff;border:1px solid #c8c8c8;box-shadow:1px 2px 4px rgba(0,0,0,0.18)"></div>
<div class="a" style="left:427px;top:62.5px;width:31px;height:19.5px;background:#c5c5c5;border:1px solid #9a9a9a"></div>
<svg style="left:0;top:54px" width="600" height="76">
<g fill="#3a78c8"><rect x="430.3" y="12" width="1.3" height="2.6"/><rect x="430" y="16.5" width="1.8" height="2.6"/><rect x="430" y="21" width="1.8" height="2.6"/></g>
<g fill="#808080"><rect x="434" y="12.7" width="8" height="1"/><rect x="434" y="17.3" width="8" height="1"/><rect x="434" y="21.9" width="8" height="1"/></g>
<path d="M449 15.5l2.5 2.5 2.5-2.5" fill="none" stroke="#555" stroke-width="1"/>
</svg>
<div class="a" style="left:427.5px;top:83.2px;width:214.5px;height:19px;background:#e9e9e9"></div>
<div class="t" style="left:434.7px;top:87.83px;font-size:10.6px;color:#666;font-weight:700;transform:scaleX(0.925);transform-origin:0 0">Formatos de número usados recientemente</div>
<div class="a" style="left:427.5px;top:173.2px;width:214.5px;height:19px;background:#e9e9e9"></div>
<div class="t" style="left:434.7px;top:177.83px;font-size:10.6px;color:#666;font-weight:700;transform:scaleX(0.925);transform-origin:0 0">Biblioteca de numeración</div>
<div class="a" style="left:427.5px;top:402.2px;width:214.5px;height:19px;background:#e9e9e9"></div>
<div class="t" style="left:434.7px;top:406.83px;font-size:10.6px;color:#666;font-weight:700;transform:scaleX(0.925);transform-origin:0 0">Formatos de números de documentos</div>
<div class="a" style="left:431.0px;top:106.6px;width:63.5px;height:63.5px;background:#fff;border:1px solid #c6c6c6"></div>
<div class="a" style="left:436.0px;top:113.10px;width:53px;height:12px;display:flex;align-items:center"><span style="font-size:10.3px;line-height:12px;color:#3a3a3a;white-space:nowrap">a)</span><span style="flex:1;height:1px;background:#9a9a9a;box-shadow:0 1px 0 #dcdcdc;margin-left:1px"></span></div>
<div class="a" style="left:436.0px;top:128.45px;width:53px;height:12px;display:flex;align-items:center"><span style="font-size:10.3px;line-height:12px;color:#3a3a3a;white-space:nowrap">b)</span><span style="flex:1;height:1px;background:#9a9a9a;box-shadow:0 1px 0 #dcdcdc;margin-left:1px"></span></div>
<div class="a" style="left:436.0px;top:143.80px;width:53px;height:12px;display:flex;align-items:center"><span style="font-size:10.3px;line-height:12px;color:#3a3a3a;white-space:nowrap">c)</span><span style="flex:1;height:1px;background:#9a9a9a;box-shadow:0 1px 0 #dcdcdc;margin-left:1px"></span></div>
<div class="a" style="left:428px;top:192.2px;width:69.5px;height:69.5px;background:#d6d6d6;border:1px solid #9c9c9c"></div>
<div class="a" style="left:431.0px;top:195.4px;width:63.5px;height:63.5px;background:#fff;border:1px solid #c6c6c6"></div>
<div class="t" style="left:262.75px;width:400px;text-align:center;top:221.93px;font-size:10.6px;color:#333;font-weight:400;">Ninguna</div>
<div class="a" style="left:431.0px;top:195.4px;width:63.5px;height:63.5px;border:1px solid #b0b0b0"></div>
<div class="a" style="left:501.2px;top:195.4px;width:63.5px;height:63.5px;background:#fff;border:1px solid #c6c6c6"></div>
<div class="a" style="left:506.2px;top:202.70px;width:53px;height:12px;display:flex;align-items:center"><span style="font-size:10.3px;line-height:12px;color:#3a3a3a;white-space:nowrap">1.</span><span style="flex:1;height:1px;background:#9a9a9a;box-shadow:0 1px 0 #dcdcdc;margin-left:1px"></span></div>
<div class="a" style="left:506.2px;top:218.05px;width:53px;height:12px;display:flex;align-items:center"><span style="font-size:10.3px;line-height:12px;color:#3a3a3a;white-space:nowrap">2.</span><span style="flex:1;height:1px;background:#9a9a9a;box-shadow:0 1px 0 #dcdcdc;margin-left:1px"></span></div>
<div class="a" style="left:506.2px;top:233.40px;width:53px;height:12px;display:flex;align-items:center"><span style="font-size:10.3px;line-height:12px;color:#3a3a3a;white-space:nowrap">3.</span><span style="flex:1;height:1px;background:#9a9a9a;box-shadow:0 1px 0 #dcdcdc;margin-left:1px"></span></div>
<div class="a" style="left:571.2px;top:195.4px;width:63.5px;height:63.5px;background:#fff;border:1px solid #c6c6c6"></div>
<div class="a" style="left:576.2px;top:202.70px;width:53px;height:12px;display:flex;align-items:center"><span style="font-size:10.3px;line-height:12px;color:#3a3a3a;white-space:nowrap">1)</span><span style="flex:1;height:1px;background:#9a9a9a;box-shadow:0 1px 0 #dcdcdc;margin-left:1px"></span></div>
<div class="a" style="left:576.2px;top:218.05px;width:53px;height:12px;display:flex;align-items:center"><span style="font-size:10.3px;line-height:12px;color:#3a3a3a;white-space:nowrap">2)</span><span style="flex:1;height:1px;background:#9a9a9a;box-shadow:0 1px 0 #dcdcdc;margin-left:1px"></span></div>
<div class="a" style="left:576.2px;top:233.40px;width:53px;height:12px;display:flex;align-items:center"><span style="font-size:10.3px;line-height:12px;color:#3a3a3a;white-space:nowrap">3)</span><span style="flex:1;height:1px;background:#9a9a9a;box-shadow:0 1px 0 #dcdcdc;margin-left:1px"></span></div>
<div class="a" style="left:431.0px;top:265.3px;width:63.5px;height:63.5px;background:#fff;border:1px solid #c6c6c6"></div>
<div class="a" style="left:436.0px;top:272.60px;width:53px;height:12px;display:flex;align-items:center"><span style="font-size:10.3px;line-height:12px;color:#3a3a3a;white-space:nowrap">I.</span><span style="flex:1;height:1px;background:#9a9a9a;box-shadow:0 1px 0 #dcdcdc;margin-left:1px"></span></div>
<div class="a" style="left:436.0px;top:287.95px;width:53px;height:12px;display:flex;align-items:center"><span style="font-size:10.3px;line-height:12px;color:#3a3a3a;white-space:nowrap"><span style="letter-spacing:-0.9px">II</span>.</span><span style="flex:1;height:1px;background:#9a9a9a;box-shadow:0 1px 0 #dcdcdc;margin-left:1px"></span></div>
<div class="a" style="left:436.0px;top:303.30px;width:53px;height:12px;display:flex;align-items:center"><span style="font-size:10.3px;line-height:12px;color:#3a3a3a;white-space:nowrap"><span style="letter-spacing:-0.9px">III</span>.</span><span style="flex:1;height:1px;background:#9a9a9a;box-shadow:0 1px 0 #dcdcdc;margin-left:1px"></span></div>
<div class="a" style="left:501.2px;top:265.3px;width:63.5px;height:63.5px;background:#fff;border:1px solid #c6c6c6"></div>
<div class="a" style="left:506.2px;top:272.60px;width:53px;height:12px;display:flex;align-items:center"><span style="font-size:10.3px;line-height:12px;color:#3a3a3a;white-space:nowrap">A.</span><span style="flex:1;height:1px;background:#9a9a9a;box-shadow:0 1px 0 #dcdcdc;margin-left:1px"></span></div>
<div class="a" style="left:506.2px;top:287.95px;width:53px;height:12px;display:flex;align-items:center"><span style="font-size:10.3px;line-height:12px;color:#3a3a3a;white-space:nowrap">B.</span><span style="flex:1;height:1px;background:#9a9a9a;box-shadow:0 1px 0 #dcdcdc;margin-left:1px"></span></div>
<div class="a" style="left:506.2px;top:303.30px;width:53px;height:12px;display:flex;align-items:center"><span style="font-size:10.3px;line-height:12px;color:#3a3a3a;white-space:nowrap">C.</span><span style="flex:1;height:1px;background:#9a9a9a;box-shadow:0 1px 0 #dcdcdc;margin-left:1px"></span></div>
<div class="a" style="left:571.2px;top:265.3px;width:63.5px;height:63.5px;background:#fff;border:1px solid #c6c6c6"></div>
<div class="a" style="left:576.2px;top:272.60px;width:53px;height:12px;display:flex;align-items:center"><span style="font-size:10.3px;line-height:12px;color:#3a3a3a;white-space:nowrap">a)</span><span style="flex:1;height:1px;background:#9a9a9a;box-shadow:0 1px 0 #dcdcdc;margin-left:1px"></span></div>
<div class="a" style="left:576.2px;top:287.95px;width:53px;height:12px;display:flex;align-items:center"><span style="font-size:10.3px;line-height:12px;color:#3a3a3a;white-space:nowrap">b)</span><span style="flex:1;height:1px;background:#9a9a9a;box-shadow:0 1px 0 #dcdcdc;margin-left:1px"></span></div>
<div class="a" style="left:576.2px;top:303.30px;width:53px;height:12px;display:flex;align-items:center"><span style="font-size:10.3px;line-height:12px;color:#3a3a3a;white-space:nowrap">c)</span><span style="flex:1;height:1px;background:#9a9a9a;box-shadow:0 1px 0 #dcdcdc;margin-left:1px"></span></div>
<div class="a" style="left:431.0px;top:335.2px;width:63.5px;height:63.5px;background:#fff;border:1px solid #c6c6c6"></div>
<div class="a" style="left:436.0px;top:342.50px;width:53px;height:12px;display:flex;align-items:center"><span style="font-size:10.3px;line-height:12px;color:#3a3a3a;white-space:nowrap">a.</span><span style="flex:1;height:1px;background:#9a9a9a;box-shadow:0 1px 0 #dcdcdc;margin-left:1px"></span></div>
<div class="a" style="left:436.0px;top:357.85px;width:53px;height:12px;display:flex;align-items:center"><span style="font-size:10.3px;line-height:12px;color:#3a3a3a;white-space:nowrap">b.</span><span style="flex:1;height:1px;background:#9a9a9a;box-shadow:0 1px 0 #dcdcdc;margin-left:1px"></span></div>
<div class="a" style="left:436.0px;top:373.20px;width:53px;height:12px;display:flex;align-items:center"><span style="font-size:10.3px;line-height:12px;color:#3a3a3a;white-space:nowrap">c.</span><span style="flex:1;height:1px;background:#9a9a9a;box-shadow:0 1px 0 #dcdcdc;margin-left:1px"></span></div>
<div class="a" style="left:501.2px;top:335.2px;width:63.5px;height:63.5px;background:#fff;border:1px solid #c6c6c6"></div>
<div class="a" style="left:506.2px;top:342.50px;width:53px;height:12px;display:flex;align-items:center"><span style="font-size:10.3px;line-height:12px;color:#3a3a3a;white-space:nowrap">i.</span><span style="flex:1;height:1px;background:#9a9a9a;box-shadow:0 1px 0 #dcdcdc;margin-left:1px"></span></div>
<div class="a" style="left:506.2px;top:357.85px;width:53px;height:12px;display:flex;align-items:center"><span style="font-size:10.3px;line-height:12px;color:#3a3a3a;white-space:nowrap"><span style="letter-spacing:-0.6px">ii</span>.</span><span style="flex:1;height:1px;background:#9a9a9a;box-shadow:0 1px 0 #dcdcdc;margin-left:1px"></span></div>
<div class="a" style="left:506.2px;top:373.20px;width:53px;height:12px;display:flex;align-items:center"><span style="font-size:10.3px;line-height:12px;color:#3a3a3a;white-space:nowrap"><span style="letter-spacing:-0.6px">iii</span>.</span><span style="flex:1;height:1px;background:#9a9a9a;box-shadow:0 1px 0 #dcdcdc;margin-left:1px"></span></div>
<div class="a" style="left:431.0px;top:424.6px;width:63.5px;height:63.5px;background:#fff;border:1px solid #c6c6c6"></div>
<div class="a" style="left:436.0px;top:431.90px;width:53px;height:12px;display:flex;align-items:center"><span style="font-size:10.3px;line-height:12px;color:#3a3a3a;white-space:nowrap">1.</span><span style="flex:1;height:1px;background:#9a9a9a;box-shadow:0 1px 0 #dcdcdc;margin-left:1px"></span></div>
<div class="a" style="left:436.0px;top:447.25px;width:53px;height:12px;display:flex;align-items:center"><span style="font-size:10.3px;line-height:12px;color:#3a3a3a;white-space:nowrap">2.</span><span style="flex:1;height:1px;background:#9a9a9a;box-shadow:0 1px 0 #dcdcdc;margin-left:1px"></span></div>
<div class="a" style="left:436.0px;top:462.60px;width:53px;height:12px;display:flex;align-items:center"><span style="font-size:10.3px;line-height:12px;color:#3a3a3a;white-space:nowrap">3.</span><span style="flex:1;height:1px;background:#9a9a9a;box-shadow:0 1px 0 #dcdcdc;margin-left:1px"></span></div>
<div class="a" style="left:501.2px;top:424.6px;width:63.5px;height:63.5px;background:#fff;border:1px solid #c6c6c6"></div>
<div class="a" style="left:506.2px;top:431.90px;width:53px;height:12px;display:flex;align-items:center"><span style="font-size:10.3px;line-height:12px;color:#3a3a3a;white-space:nowrap">a)</span><span style="flex:1;height:1px;background:#9a9a9a;box-shadow:0 1px 0 #dcdcdc;margin-left:1px"></span></div>
<div class="a" style="left:506.2px;top:447.25px;width:53px;height:12px;display:flex;align-items:center"><span style="font-size:10.3px;line-height:12px;color:#3a3a3a;white-space:nowrap">b)</span><span style="flex:1;height:1px;background:#9a9a9a;box-shadow:0 1px 0 #dcdcdc;margin-left:1px"></span></div>
<div class="a" style="left:506.2px;top:462.60px;width:53px;height:12px;display:flex;align-items:center"><span style="font-size:10.3px;line-height:12px;color:#3a3a3a;white-space:nowrap">c)</span><span style="flex:1;height:1px;background:#9a9a9a;box-shadow:0 1px 0 #dcdcdc;margin-left:1px"></span></div>
<div class="a" style="left:427.5px;top:491.3px;width:229px;height:1px;background:#e2e2e2"></div>
<div class="a" style="left:419px;top:181px;width:17px;height:6.5px;background:rgba(0,0,0,0.12);filter:blur(0.6px)"></div>
<div class="t" style="left:454.2px;top:499.04px;font-size:10px;color:#aaa;font-weight:400;"><u>C</u>ambiar nivel de lista</div>
<div class="t" style="left:454.2px;top:519.13px;font-size:10px;color:#3a3a3a;font-weight:400;"><u>D</u>efinir nuevo formato de número...</div>
<div class="t" style="left:454.2px;top:539.03px;font-size:10px;color:#aaa;font-weight:400;letter-spacing:-0.14px">Establecer valor de <u>n</u>umeración...</div>
<svg style="left:0;top:0" width="1280" height="684">
<g fill="#aaa"><path d="M644.5 499.5l3.5 3-3.5 3z"/>
<rect x="650" y="557" width="1.3" height="1.3"/><rect x="653" y="557" width="1.3" height="1.3"/><rect x="653" y="554" width="1.3" height="1.3"/></g>
<g fill="none" stroke="#b0b0b0" stroke-width="1"><path d="M436 501h-3.5M434.5 499l-2 2 2 2"/><path d="M438 498.5h5M438 501h5M440 503.5h3"/>
<path d="M432.5 538.5v2M432.5 542v2M432.5 545.5v2"/><path d="M435 547.5h8" /><path d="M435 545l7-6"/><path d="M435 539h4"/></g>
<circle cx="437" cy="501" r="1.3" fill="#b0b0b0"/>
</svg>
<svg style="left:0;top:0" width="1280" height="684"><path d="M0 0H1280V684H0ZM1275 0H1280V684H1275ZM54.3 31H95.2V61H54.3ZM419 58H676V570H419ZM295 390H329.5V605H295Z" fill="#000" fill-opacity="0.15" fill-rule="evenodd"/></svg>
<svg style="left:0;top:0" width="1280" height="684"><defs><filter id="bl355" x="-20%" y="-20%" width="140%" height="140%"><feGaussianBlur stdDeviation="0.5"/></filter></defs><polygon points="393.4,52.2 428.8,72.3 393.4,92.8 399.1,72.3" fill="#303030" transform="translate(2.2,3.7)" filter="url(#bl355)"/><polygon points="393.4,52.2 428.8,72.3 393.4,92.8 399.1,72.3" fill="#ff0000"/></svg>
<svg style="left:0;top:0" width="1280" height="684"><defs><filter id="bl356" x="-20%" y="-20%" width="140%" height="140%"><feGaussianBlur stdDeviation="0.5"/></filter></defs><polygon points="248.8,433.8 296.7,486.2 248.8,537.4 257.4,486.2" fill="#303030" transform="translate(2.2,3.7)" filter="url(#bl356)"/><polygon points="248.8,433.8 296.7,486.2 248.8,537.4 257.4,486.2" fill="#ff0000"/></svg>
<svg style="left:0;top:0" width="1280" height="684"><defs><filter id="ob357" x="-10%" y="-30%" width="120%" height="160%"><feGaussianBlur stdDeviation="0.4"/></filter></defs><g font-family="Liberation Sans" font-size="33" stroke-linejoin="round" letter-spacing="0.9" transform="translate(207,84) scale(0.95,1)"><text x="0" y="0" fill="#b23c3c" stroke="#b23c3c" stroke-width="4.4" filter="url(#ob357)" opacity="0.9">Numeración</text><text x="0" y="0" fill="#fff" stroke="#fff" stroke-width="0.35">Numeración</text></g></svg>
<svg style="left:0;top:0" width="1280" height="684"><defs><filter id="ob358" x="-10%" y="-30%" width="120%" height="160%"><feGaussianBlur stdDeviation="0.4"/></filter></defs><g font-family="Liberation Sans" font-size="33.5" stroke-linejoin="round" letter-spacing="0.9" transform="translate(101.3,496.5) scale(0.94,1)"><text x="0" y="0" fill="#b23c3c" stroke="#b23c3c" stroke-width="4.4" filter="url(#ob358)" opacity="0.9">Ejemplo</text><text x="0" y="0" fill="#fff" stroke="#fff" stroke-width="0.35">Ejemplo</text></g></svg>
</body></html>
